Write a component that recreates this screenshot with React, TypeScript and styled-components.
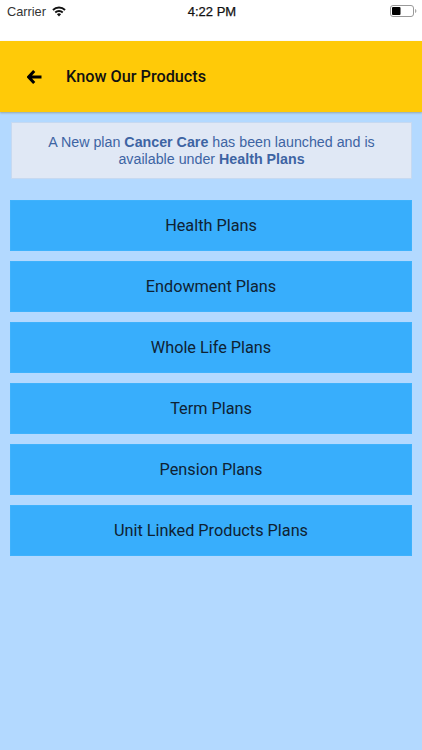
import React from 'react'
import styled, { createGlobalStyle } from 'styled-components'

const GlobalStyle = createGlobalStyle`
  html, body {
    margin: 0;
    padding: 0;
    background: #b3d9ff;
  }
  * {
    box-sizing: border-box;
  }
`

const Screen = styled.div`
  width: 422px;
  height: 750px;
  overflow: hidden;
  display: flex;
  flex-direction: column;
  background: #b3d9ff;
  font-family: Roboto, sans-serif;
`

const StatusBar = styled.div`
  height: 41px;
  flex: none;
  background: #fff;
  display: grid;
  grid-template-columns: 1fr auto 1fr;
  padding: 0 5px 19px 7px;
  align-items: center;
  font-family: "Liberation Sans", Arial, sans-serif;
  color: #111;
`

const Carrier = styled.div`
  display: flex;
  align-items: center;
  gap: 6px;
  font-size: 12.75px;
  color: #333;
`

const Clock = styled.div`
  font-size: 13px;
  font-weight: 400;
  -webkit-text-stroke: 0.25px #111;
`

const BatteryWrap = styled.div`
  justify-self: end;
  display: flex;
  align-items: center;
`

const AppBar = styled.div`
  height: 71px;
  flex: none;
  background: #ffca08;
  display: flex;
  align-items: center;
  padding-left: 27px;
  gap: 18px;
  box-shadow: 0 1px 2px rgba(90, 70, 0, 0.35);
`

const BackIcon = styled.svg`
  width: 15px;
  height: 14px;
  flex: none;
  margin-right: 6px;
`

const Title = styled.div`
  font-size: 16.25px;
  font-weight: 500;
  color: #111;
  margin-top: -1px;
`

const Content = styled.div`
  flex: 1;
  display: flex;
  flex-direction: column;
  padding: 10px 10px 0 10px;
`

const Notice = styled.div`
  height: 57px;
  margin: 0 0 0 1px;
  background: #e0e8f5;
  border: 1px solid #c6d9f1;
  color: #3d64a3;
  font-family: "Liberation Sans", Arial, sans-serif;
  font-size: 14.25px;
  line-height: 17.5px;
  text-align: center;
  display: flex;
  align-items: center;
  justify-content: center;
  padding: 1px 30px 0;

  b {
    font-weight: 700;
  }
`

const PlanList = styled.div`
  display: flex;
  flex-direction: column;
  gap: 10px;
  margin-top: 21px;
`

const PlanButton = styled.div`
  height: 51px;
  background: #38aefc;
  border: 1px solid #3fb2fc;
  color: #0f2233;
  font-size: 16.25px;
  display: flex;
  align-items: center;
  justify-content: center;
`

const plans = [
  'Health Plans',
  'Endowment Plans',
  'Whole Life Plans',
  'Term Plans',
  'Pension Plans',
  'Unit Linked Products Plans',
]

const App: React.FC = () => {
  return (
    <Screen>
      <GlobalStyle />
      <StatusBar>
        <Carrier>
          Carrier
          <svg width="14" height="11" viewBox="0 0 14 11">
            <path d="M7 10.6L4.9 8.3a3 3 0 0 1 4.2 0z" fill="#111" />
            <path d="M3.9 7.2L2.6 5.8a6.3 6.3 0 0 1 8.8 0L10.1 7.2a4.4 4.4 0 0 0-6.2 0z" fill="#111" />
            <path d="M1.6 4.7L.3 3.3a9.6 9.6 0 0 1 13.4 0L12.4 4.7a7.7 7.7 0 0 0-10.8 0z" fill="#111" />
          </svg>
        </Carrier>
        <Clock>4:22 PM</Clock>
        <BatteryWrap>
          <svg width="27" height="12" viewBox="0 0 27 12">
            <rect x="0.5" y="0.5" width="23" height="11" rx="2.5" fill="none" stroke="#999" />
            <rect x="2" y="2" width="8.5" height="8" rx="1" fill="#000" />
            <path d="M25 4v4c.8-.3 1.4-1 1.4-2s-.6-1.7-1.4-2z" fill="#aaa" />
          </svg>
        </BatteryWrap>
      </StatusBar>
      <AppBar>
        <BackIcon viewBox="0 0 15 14">
          <path d="M7.2 1L1.6 7l5.6 6M2.5 7H14.5" stroke="#000" strokeWidth="3" fill="none" />
        </BackIcon>
        <Title>Know Our Products</Title>
      </AppBar>
      <Content>
        <Notice>
          <span>
            A New plan <b>Cancer Care</b> has been launched and is available under <b>Health Plans</b>
          </span>
        </Notice>
        <PlanList>
          {plans.map((plan) => (
            <PlanButton key={plan}>{plan}</PlanButton>
          ))}
        </PlanList>
      </Content>
    </Screen>
  )
}

export default App
